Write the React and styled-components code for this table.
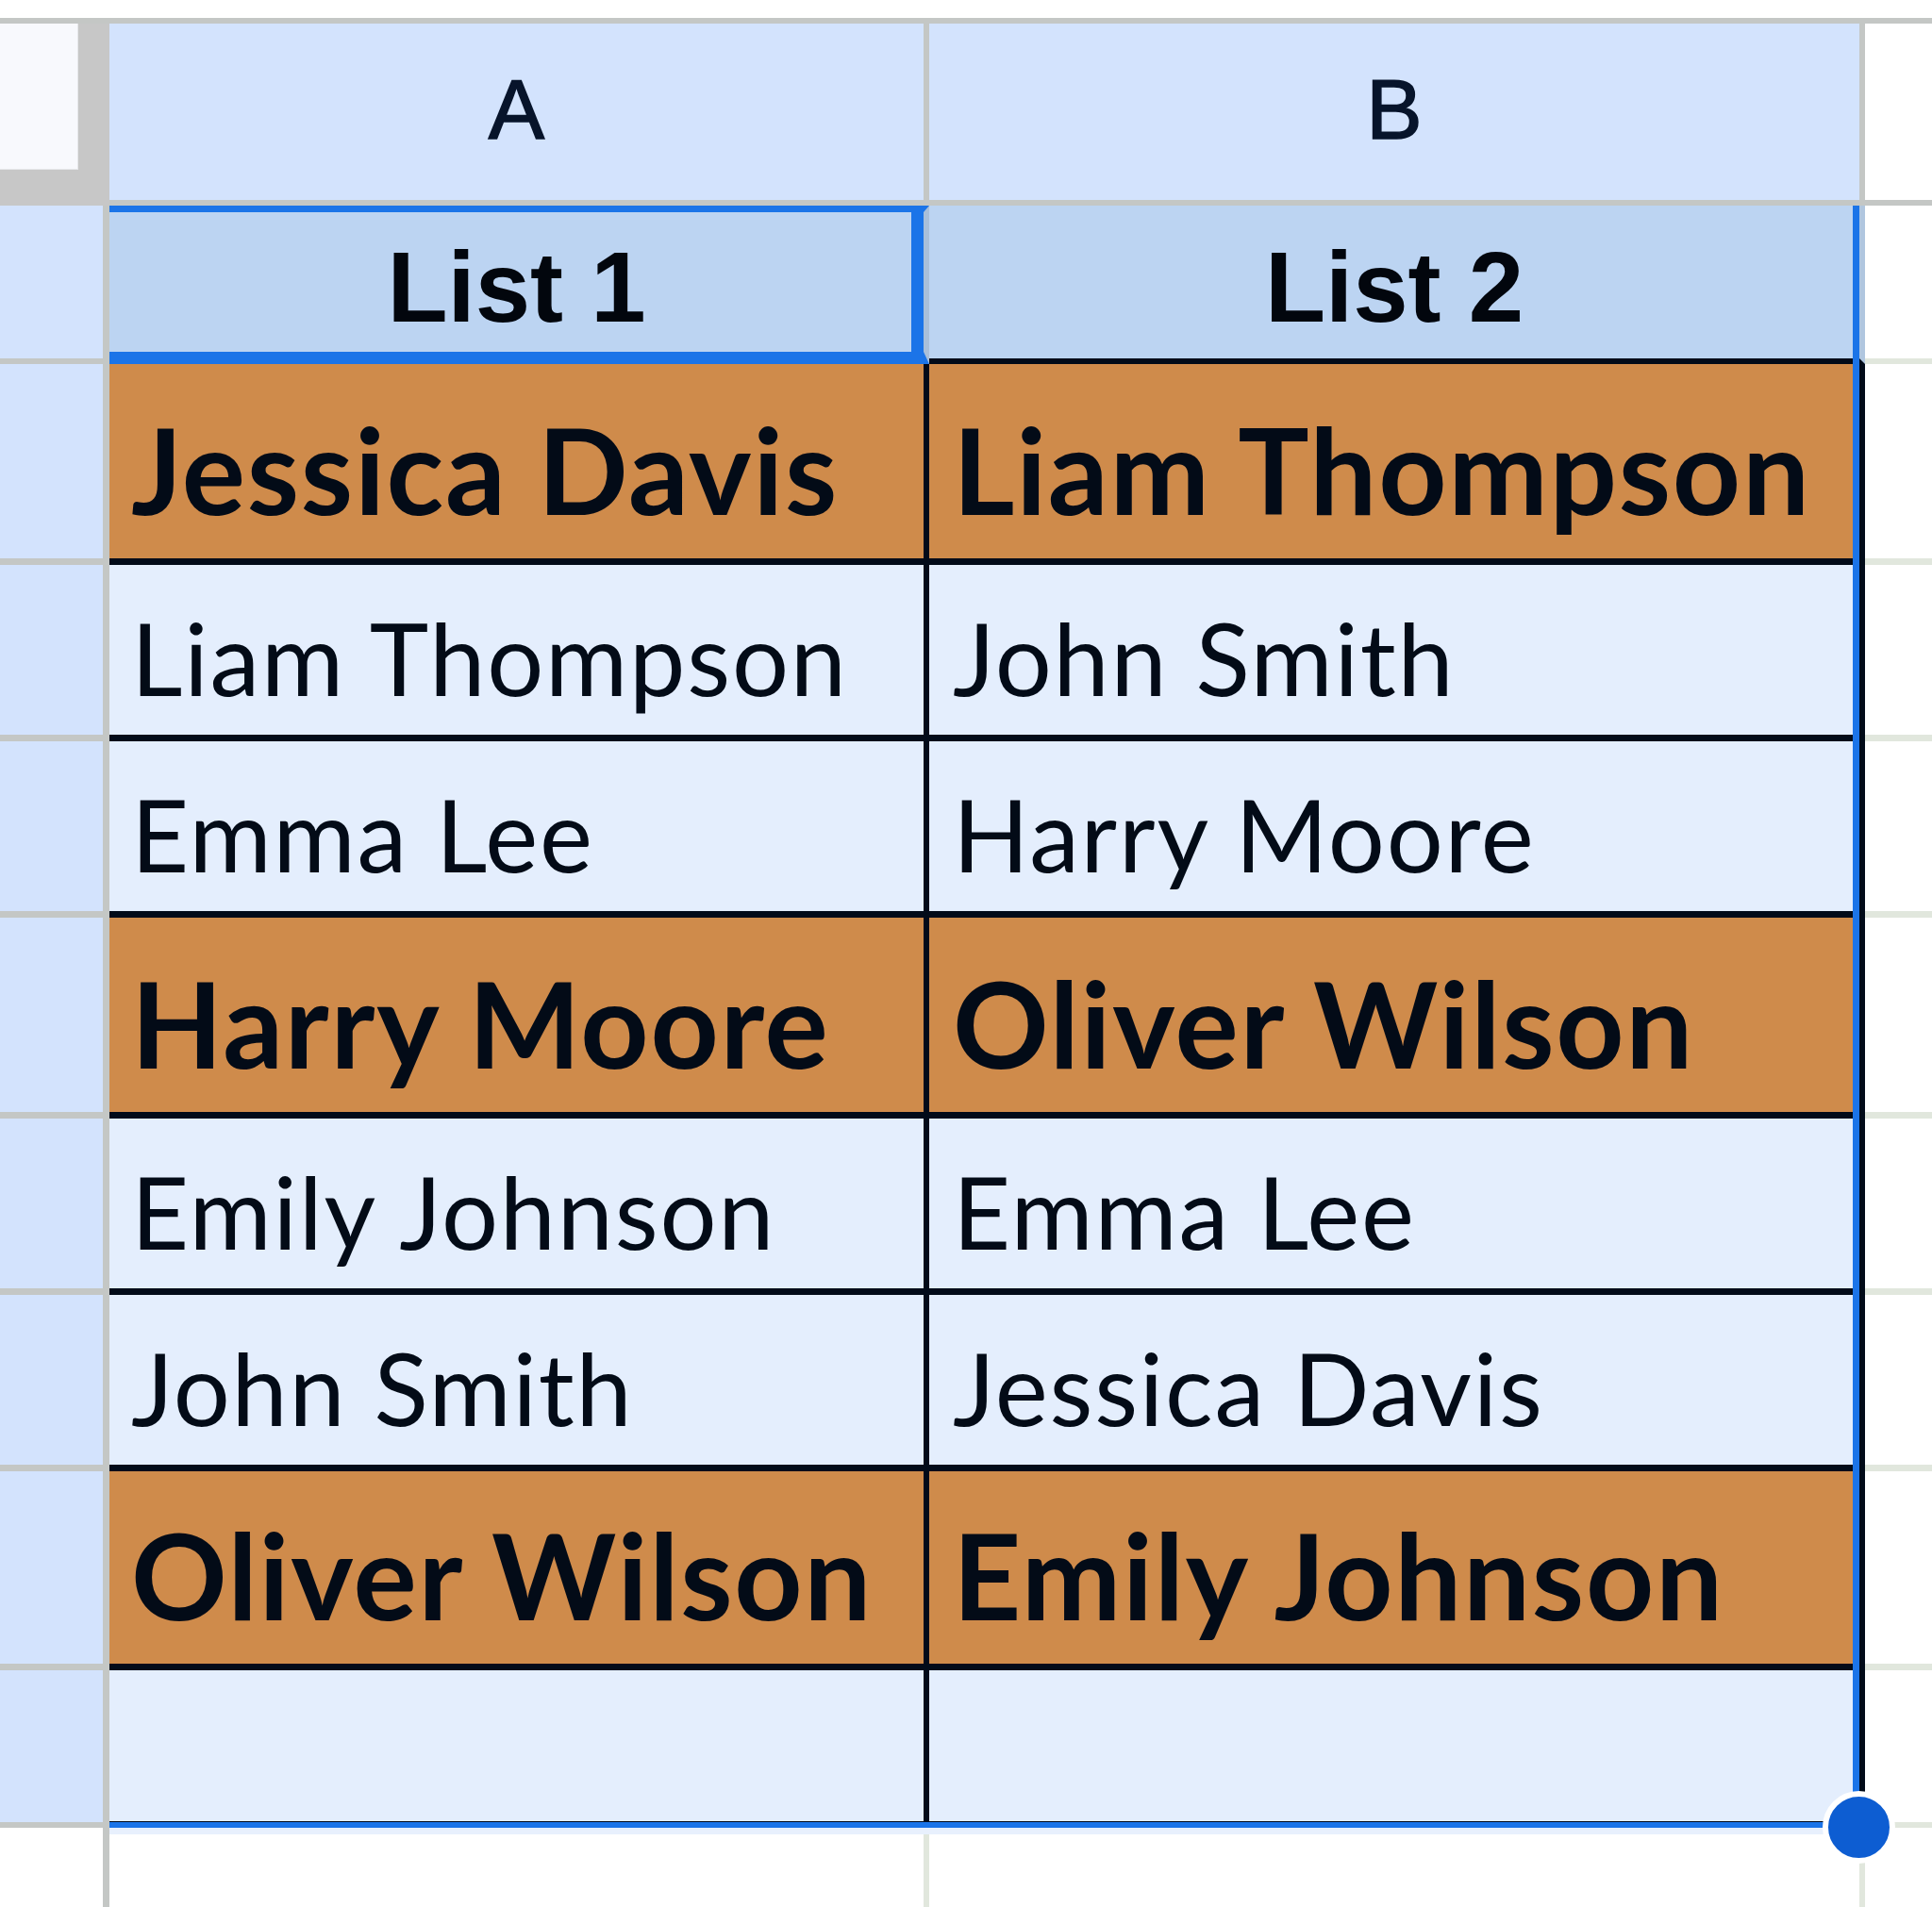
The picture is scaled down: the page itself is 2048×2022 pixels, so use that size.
import React from "react";
import styled, { createGlobalStyle, css } from "styled-components";

const GlobalStyle = createGlobalStyle`
  html, body {
    margin: 0;
    padding: 0;
    background: #ffffff;
  }
  body {
    font-family: "Lato", "Open Sans", sans-serif;
    overflow: hidden;
  }
`;

const GRID = "#c4c7c5";
const LIGHT_GRID = "#e1e7dd";
const BLUE = "#1b74e8";
const INK = "#020b19";
const COLS = "116px 869px 992px 1fr";

const names = [
  { a: "Jessica Davis", b: "Liam Thompson", hit: true, h: 213 },
  { a: "Liam Thompson", b: "John Smith", h: 187 },
  { a: "Emma Lee", b: "Harry Moore", h: 187 },
  { a: "Harry Moore", b: "Oliver Wilson", hit: true, h: 213 },
  { a: "Emily Johnson", b: "Emma Lee", h: 187 },
  { a: "John Smith", b: "Jessica Davis", h: 187 },
  { a: "Oliver Wilson", b: "Emily Johnson", hit: true, h: 211 },
];

export default function App() {
  return (
    <Page>
      <GlobalStyle />
      <Sheet>
        <Row $h={193}>
          <Corner>
            <SelectAll />
          </Corner>
          <ColHead>A</ColHead>
          <ColHead>B</ColHead>
          <ColHeadEmpty />
        </Row>

        <Row $h={168}>
          <RowHead $sel $line={6} />
          <ListCell $active>List 1</ListCell>
          <ListCell>List 2</ListCell>
          <Spare $line={6} />
        </Row>

        {names.map((r, i) => (
          <Row key={i} $h={r.h}>
            <RowHead $sel $line={7} />
            <NameCell $hit={r.hit} $pad={23}>{r.a}</NameCell>
            <NameCell $hit={r.hit} $pad={25}>{r.b}</NameCell>
            <Spare $line={7} />
          </Row>
        ))}

        <Row $h={167}>
          <RowHead $sel $line={6} />
          <NameCell />
          <NameCell />
          <Spare $line={6} />
        </Row>

        <Row $h={120}>
          <RowHead $line={6} />
          <OutsideCell />
          <OutsideCell />
          <Spare $line={6} />
        </Row>

        <Selection />
        <FillHandle />
      </Sheet>
    </Page>
  );
}

const Page = styled.div`
  padding-top: 19px;
  height: 2022px;
  box-sizing: border-box;
  overflow: hidden;
`;

const Sheet = styled.div`
  position: relative;
  border-top: 6px solid ${GRID};
`;

const Row = styled.div`
  display: grid;
  grid-template-columns: ${COLS};
  height: ${(p) => p.$h}px;
`;

const Corner = styled.div`
  box-sizing: border-box;
  background: #c7c7c7;
`;

const SelectAll = styled.div`
  width: 83px;
  height: 155px;
  box-sizing: border-box;
  background: #f8f9fd;
  border-right: 1px solid #e6e7ea;
  border-bottom: 1px solid #e6e7ea;
`;

const ColHead = styled.div`
  box-sizing: border-box;
  display: flex;
  align-items: flex-end;
  justify-content: center;
  padding-bottom: 51px;
  background: #d3e3fd;
  border-right: 6px solid ${GRID};
  border-bottom: 6px solid ${GRID};
  font: 400 89px/1 "Liberation Sans", Arial, sans-serif;
  color: #07142b;
  -webkit-text-stroke: 1.5px #07142b;
`;

const ColHeadEmpty = styled.div`
  background: #ffffff;
  border-bottom: 6px solid ${GRID};
`;

const RowHead = styled.div`
  box-sizing: border-box;
  background: ${(p) => (p.$sel ? "#d3e3fd" : "#ffffff")};
  border-right: 7px solid ${GRID};
  border-bottom: ${(p) => p.$line}px solid ${GRID};
`;

const ListCell = styled.div`
  box-sizing: border-box;
  display: flex;
  align-items: flex-end;
  justify-content: center;
  background: #bcd4f2;
  font: 700 105px/1 "Liberation Sans", Arial, sans-serif;
  color: #02060d;

  ${(p) =>
    p.$active
      ? css`
          border-top: 7px solid ${BLUE};
          border-bottom: 13px solid ${BLUE};
          border-right: 6px solid #a9bfd9;
          box-shadow: inset -13px 0 0 ${BLUE};
          padding-bottom: 16px;
        `
      : css`
          border-bottom: 6px solid ${INK};
          border-right: 6px solid #b0c6df;
          padding-bottom: 23px;
        `}
`;

const NameCell = styled.div`
  box-sizing: border-box;
  display: flex;
  align-items: flex-end;
  padding-left: ${(p) => p.$pad || 20}px;
  padding-bottom: ${(p) => (p.$hit ? 31 : 29)}px;
  background: ${(p) => (p.$hit ? "#cf8b4b" : "#e4eefd")};
  border-right: 6px solid ${INK};
  border-bottom: 7px solid ${INK};
  font-family: "Lato", "Open Sans", sans-serif;
  font-size: ${(p) => (p.$hit ? 126 : 106)}px;
  font-weight: ${(p) => (p.$hit ? 700 : 400)};
  letter-spacing: ${(p) => (p.$hit ? 1.7 : 1.8)}px;
  line-height: 1;
  color: #030b17;
  white-space: nowrap;
  overflow: hidden;
`;

const OutsideCell = styled.div`
  background: #ffffff;
  border-right: 6px solid ${LIGHT_GRID};
`;

const Spare = styled.div`
  box-sizing: border-box;
  background: #ffffff;
  border-bottom: ${(p) => p.$line}px solid ${LIGHT_GRID};
`;

const Selection = styled.div`
  position: absolute;
  top: 193px;
  left: 116px;
  width: 1855px;
  height: 1720px;
  box-sizing: border-box;
  border-right: 7px solid ${BLUE};
  border-bottom: 6px solid ${BLUE};
  box-shadow: 0 7px 0 0 #e8f0fd;
  pointer-events: none;
`;

const FillHandle = styled.div`
  position: absolute;
  left: 1932px;
  top: 1874px;
  width: 65px;
  height: 65px;
  border-radius: 50%;
  background: #0d5dd2;
  border: 6px solid #ffffff;
`;
